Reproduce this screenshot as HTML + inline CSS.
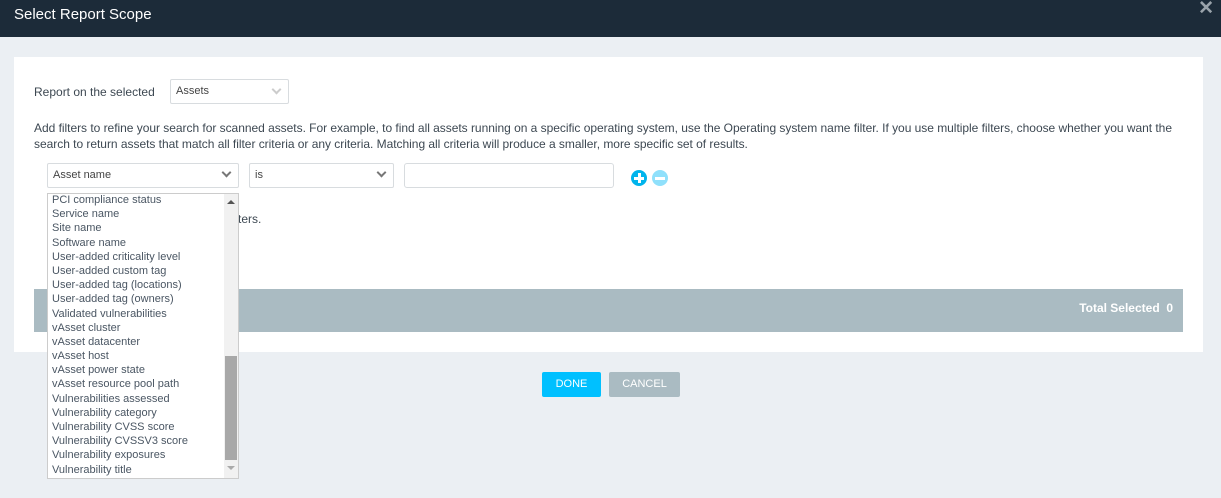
<!DOCTYPE html>
<html><head><style>
*{margin:0;padding:0;box-sizing:border-box}
body{width:1221px;height:498px;background:#ebeff3;font-family:"Liberation Sans",sans-serif;font-size:12px;color:#3d4852;position:relative;overflow:hidden}
.hdr{position:absolute;left:0;top:0;width:1221px;height:37px;background:#1c2b39;color:#fff;font-size:15px;padding:6px 0 0 14px}
.x{position:absolute;right:7px;top:-3px;color:#9aa3ab;font-size:19px;font-weight:bold}
.panel{position:absolute;left:14px;top:57px;width:1189px;height:295px;background:#fff}
.abs{position:absolute}
.sel{position:absolute;border:1px solid #d8dcdf;background:#fff;border-radius:2px;font-size:11px;padding-left:5px;color:#444}
.chev{position:absolute;right:8px;top:4px;width:7px;height:7px;border-right:2px solid #777;border-bottom:2px solid #777;transform:rotate(45deg)}
.list{position:absolute;left:47px;top:193px;width:192px;height:286px;border:1px solid #ccc;background:#fff;overflow:hidden}
.list div{height:14.2px;line-height:14px;padding-left:4px;font-size:11px;color:#4a5663;white-space:nowrap}
.bar{position:absolute;left:34px;top:289px;width:1149px;height:43px;background:#aabbc2;color:#fff;font-size:12px;font-weight:bold;text-align:right;padding:12px 10px 0 0}
.btn{position:absolute;top:372px;height:25px;line-height:25px;text-align:center;color:#fff;font-size:11px;border-radius:2px}
</style></head><body>
<div class="hdr">Select Report Scope<span class="x">✕</span></div>
<div class="panel"></div>
<div class="abs" style="left:34px;top:85px">Report on the selected</div>
<div class="sel" style="left:170px;top:79px;width:119px;height:25px;line-height:23px">Assets<span class="chev" style="border-color:#ccc;top:6px"></span></div>
<div class="abs" style="left:34px;top:120px;width:1150px;line-height:16px;letter-spacing:-0.03px">Add filters to refine your search for scanned assets. For example, to find all assets running on a specific operating system, use the Operating system name filter. If you use multiple filters, choose whether you want the search to return assets that match all filter criteria or any criteria. Matching all criteria will produce a smaller, more specific set of results.</div>
<div class="sel" style="left:47px;top:163px;width:192px;height:25px;line-height:23px">Asset name<span class="chev" style="top:5px"></span></div>
<div class="sel" style="left:249px;top:163px;width:145px;height:25px;line-height:23px">is<span class="chev" style="top:5px"></span></div>
<div class="sel" style="left:404px;top:163px;width:210px;height:25px;border-radius:3px"></div>
<div class="abs" style="left:631px;top:170px;width:16px;height:16px;border-radius:50%;background:#00b4ec"><div class="abs" style="left:3px;top:6.5px;width:10px;height:3px;background:#fff"></div><div class="abs" style="left:6.5px;top:3px;width:3px;height:10px;background:#fff"></div></div>
<div class="abs" style="left:652px;top:170px;width:16px;height:16px;border-radius:50%;background:#8fe0fb"><div class="abs" style="left:3px;top:6.5px;width:10px;height:3px;background:#fff"></div></div>
<div class="abs" style="left:238px;top:212px">ters.</div>
<div class="bar">Total Selected&nbsp; 0</div>
<div class="list">
<div style="margin-top:-1px">PCI compliance status</div><div>Service name</div><div>Site name</div><div>Software name</div><div>User-added criticality level</div><div>User-added custom tag</div><div>User-added tag (locations)</div><div>User-added tag (owners)</div><div>Validated vulnerabilities</div><div>vAsset cluster</div><div>vAsset datacenter</div><div>vAsset host</div><div>vAsset power state</div><div>vAsset resource pool path</div><div>Vulnerabilities assessed</div><div>Vulnerability category</div><div>Vulnerability CVSS score</div><div>Vulnerability CVSSV3 score</div><div>Vulnerability exposures</div><div>Vulnerability title</div>
<span class="abs" style="left:176px;top:0;width:14px;height:284px;background:#f1f1f1"></span>
<span class="abs" style="left:177px;top:162px;width:12px;height:104px;background:#a8a8a8"></span>
<span class="abs" style="left:179px;top:6px;border:4px solid transparent;border-bottom:4px solid #555;border-top:0;width:0;height:0"></span>
<span class="abs" style="left:179px;top:272px;border:4px solid transparent;border-top:4px solid #aaa;border-bottom:0;width:0;height:0"></span>
</div>
<div class="btn" style="left:542px;width:59px;background:#00c0ff">DONE</div>
<div class="btn" style="left:609px;width:71px;background:#aabbc2">CANCEL</div>
</body></html>
